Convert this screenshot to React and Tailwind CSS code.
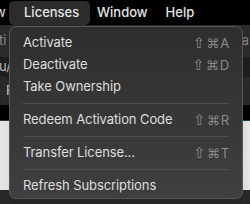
import React from 'react';

const items = [
  { label: 'Activate', keys: 'A' },
  { label: 'Deactivate', keys: 'D' },
  { label: 'Take Ownership' },
  'sep',
  { label: 'Redeem Activation Code', keys: 'R' },
  'sep',
  { label: 'Transfer License...', keys: 'T' },
  'sep',
  { label: 'Refresh Subscriptions' },
];

function Shortcut({ k }) {
  return (
    <span className="flex items-center gap-[1px] text-[13px] leading-none text-[#8a8a8a]" style={{ fontFamily: '"DejaVu Sans", sans-serif' }}>
      <span className="text-[15px]">⇧</span>
      <span className="text-[13px]">⌘</span>
      <span className="text-[13px]" style={{ fontFamily: 'Inter, sans-serif' }}>{k}</span>
    </span>
  );
}

export default function App() {
  return (
    <div className="relative w-[250px] h-[204px] overflow-hidden bg-black" style={{ fontFamily: 'Inter, "Noto Sans", sans-serif' }}>
      {/* menu bar */}
      <div className="flex h-[25px] items-center bg-black text-[13px] text-[#e4e4e4]">
        <span className="-ml-[5px] w-[14px]">w</span>
        <span className="flex h-[24px] w-[81px] items-center rounded-[5px] bg-[#2c2c2c] pl-[15px] font-medium">Licenses</span>
        <span className="ml-[7px] font-medium">Window</span>
        <span className="ml-[18px] font-medium">Help</span>
      </div>

      {/* content behind the menu */}
      <div className="flex flex-col text-[13px]">
        <div className="flex h-[32px] items-center justify-between bg-[#2b2b2b] text-[#8a8a8a]">
          <span className="-ml-[1px]">ti</span>
          <span className="mr-[1px]">a</span>
        </div>
        <div className="flex h-[20px] items-center bg-[#1e1e1e] text-[#bdbdbd]">
          <span className="-ml-[1px]">u/:</span>
        </div>
        <div className="flex h-[28px] items-center bg-[#2a2a2a] text-[#cfcfcf]">
          <span className="ml-[6px]">F</span>
        </div>
        <div className="h-[15px] bg-black" />
        <div className="h-[1px] bg-[#1f3a40]" />
        <div className="h-[69px] bg-[#e6e6e6]" />
        <div className="h-[14px] bg-[#2a2a2a]" />
      </div>

      {/* dropdown */}
      <div className="absolute left-[9px] top-[26px] w-[234px] h-[173px] rounded-[7px] border border-[#575757] bg-linear-to-b from-[#2e2e2e] to-[#3f3f3f] pt-[5px] pb-[3px] shadow-lg">
        {items.map((it, i) =>
          it === 'sep' ? (
            <div key={i} className="flex h-[11px] items-center px-[13px]">
              <div className="h-px w-full bg-[#4f4f4f]" />
            </div>
          ) : (
            <div key={i} className="flex h-[22px] items-center justify-between pl-[13px] pr-[13px] text-[13px] tracking-[-0.1px] text-[#dedede]">
              <span>{it.label}</span>
              {it.keys && <Shortcut k={it.keys} />}
            </div>
          )
        )}
      </div>
    </div>
  );
}
